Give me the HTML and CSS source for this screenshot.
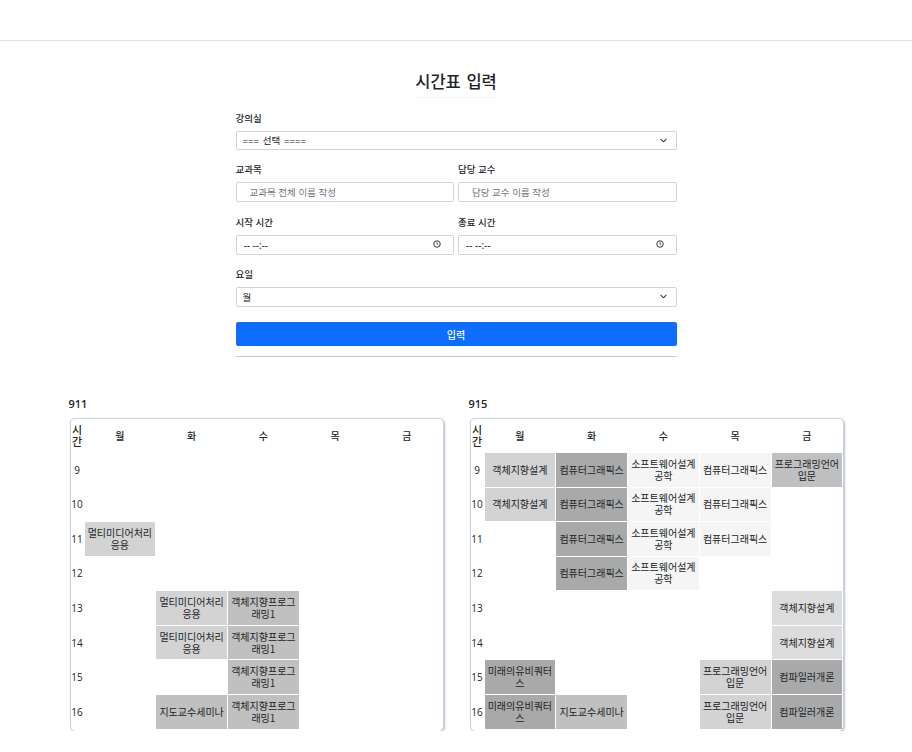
FILE: index.html
```html
<!DOCTYPE html>
<html lang="ko">
<head>
  <meta charset="UTF-8" />
  <meta name="viewport" content="width=device-width, initial-scale=1.0" />
  <title>시간표 입력</title>
  <link rel="stylesheet" href="styles.css">
</head>
<body>
  <header class="topbar"></header>

  <main>
    <div class="page-title">
      <h1>시간표 입력</h1>
    </div>

    <form class="entry-form">
      <div class="field">
        <label for="room">강의실</label>
        <div class="control">
          <select id="room" class="short">
            <option>=== 선택 ====</option>
            <option>911</option>
            <option>915</option>
          </select>
          <svg class="control-icon chevron" viewBox="0 0 16 16"><path d="M2 5l6 6 6-6" fill="none" stroke="#343a40" stroke-width="2.4" stroke-linecap="round" stroke-linejoin="round"/></svg>
        </div>
      </div>

      <div class="field-row wide">
        <div class="field">
          <label for="subject">교과목</label>
          <input type="text" id="subject" class="text-input" placeholder="교과목 전체 이름 작성">
        </div>
        <div class="field">
          <label for="professor">담당 교수</label>
          <input type="text" id="professor" class="text-input" placeholder="담당 교수 이름 작성">
        </div>
      </div>

      <div class="field-row">
        <div class="field">
          <label for="start">시작 시간</label>
          <div class="control">
            <input type="text" id="start" class="time-input" value="-- --:--">
            <svg class="control-icon clock" viewBox="0 0 16 16"><circle cx="8" cy="8" r="6.5" fill="none" stroke="#222" stroke-width="1.8"/><path d="M8 4v4.3l2.6 1.6" fill="none" stroke="#222" stroke-width="1.5"/></svg>
          </div>
        </div>
        <div class="field">
          <label for="end">종료 시간</label>
          <div class="control">
            <input type="text" id="end" class="time-input" value="-- --:--">
            <svg class="control-icon clock" viewBox="0 0 16 16"><circle cx="8" cy="8" r="6.5" fill="none" stroke="#222" stroke-width="1.8"/><path d="M8 4v4.3l2.6 1.6" fill="none" stroke="#222" stroke-width="1.5"/></svg>
          </div>
        </div>
      </div>

      <div class="field">
        <label for="day">요일</label>
        <div class="control">
          <select id="day">
            <option>월</option>
            <option>화</option>
            <option>수</option>
            <option>목</option>
            <option>금</option>
          </select>
          <svg class="control-icon chevron" viewBox="0 0 16 16"><path d="M2 5l6 6 6-6" fill="none" stroke="#343a40" stroke-width="2.4" stroke-linecap="round" stroke-linejoin="round"/></svg>
        </div>
      </div>

      <button type="button" class="submit">입력</button>
    </form>

    <hr class="divider">

    <div class="rooms">
      <section>
        <h2>911</h2>
        <div class="card">
          <div class="timetable">
            <div class="head time">시간</div><div class="head">월</div><div class="head">화</div><div class="head">수</div><div class="head">목</div><div class="head">금</div>
            <div class="time">9</div><div></div><div></div><div></div><div></div><div></div>
            <div class="time">10</div><div></div><div></div><div></div><div></div><div></div>
            <div class="time">11</div><div class="lightgray">멀티미디어처리응용</div><div></div><div></div><div></div><div></div>
            <div class="time">12</div><div></div><div></div><div></div><div></div><div></div>
            <div class="time">13</div><div></div><div class="lightgray">멀티미디어처리응용</div><div class="silver">객체지향프로그래밍1</div><div></div><div></div>
            <div class="time">14</div><div></div><div class="lightgray">멀티미디어처리응용</div><div class="silver">객체지향프로그래밍1</div><div></div><div></div>
            <div class="time">15</div><div></div><div></div><div class="silver">객체지향프로그래밍1</div><div></div><div></div>
            <div class="time">16</div><div></div><div class="silver">지도교수세미나</div><div class="silver">객체지향프로그래밍1</div><div></div><div></div>
          </div>
        </div>
      </section>

      <section>
        <h2>915</h2>
        <div class="card">
          <div class="timetable">
            <div class="head time">시간</div><div class="head">월</div><div class="head">화</div><div class="head">수</div><div class="head">목</div><div class="head">금</div>
            <div class="time">9</div><div class="lightgray">객체지향설계</div><div class="darkgray">컴퓨터그래픽스</div><div class="whitesmoke">소프트웨어설계공학</div><div class="whitesmoke">컴퓨터그래픽스</div><div class="silver">프로그래밍언어입문</div>
            <div class="time">10</div><div class="lightgray">객체지향설계</div><div class="darkgray">컴퓨터그래픽스</div><div class="whitesmoke">소프트웨어설계공학</div><div class="whitesmoke">컴퓨터그래픽스</div><div></div>
            <div class="time">11</div><div></div><div class="darkgray">컴퓨터그래픽스</div><div class="whitesmoke">소프트웨어설계공학</div><div class="whitesmoke">컴퓨터그래픽스</div><div></div>
            <div class="time">12</div><div></div><div class="darkgray">컴퓨터그래픽스</div><div class="whitesmoke">소프트웨어설계공학</div><div></div><div></div>
            <div class="time">13</div><div></div><div></div><div></div><div></div><div class="gainsboro">객체지향설계</div>
            <div class="time">14</div><div></div><div></div><div></div><div></div><div class="gainsboro">객체지향설계</div>
            <div class="time">15</div><div class="darkgray">미래의유비쿼터스</div><div></div><div></div><div class="lightgray">프로그래밍언어입문</div><div class="darkgray">컴파일러개론</div>
            <div class="time">16</div><div class="darkgray">미래의유비쿼터스</div><div class="silver">지도교수세미나</div><div></div><div class="lightgray">프로그래밍언어입문</div><div class="darkgray">컴파일러개론</div>
          </div>
        </div>
      </section>
    </div>
  </main>
</body>
</html>
```

FILE: styles.css
```css
* {
  box-sizing: border-box;
}
body {
  font-family: "Liberation Sans", "Noto Sans CJK KR", sans-serif;
  background-color: #fff;
  color: #212529;
  margin: 0;
}
.topbar {
  height: 41px;
  border-bottom: 1px solid #dee2e6;
}
.page-title {
  text-align: center;
  padding-top: 28px;
}
h1 {
  display: inline-block;
  margin: 0;
  font-size: 16.5px;
  font-weight: 500;
  font-family: "Noto Sans CJK KR", sans-serif;
  word-spacing: 1px;
  line-height: 25px;
  padding-bottom: 3px;
  border-bottom: 1px solid #f3f3f3;
}
.entry-form {
  width: 441px;
  margin: 14px auto 0;
  display: flex;
  flex-direction: column;
}
.field {
  flex: 1;
  display: flex;
  flex-direction: column;
  margin-bottom: 13px;
}
.field-row {
  display: flex;
  gap: 4px;
}
.field-row.wide .field {
  margin-bottom: 14px;
}
label {
  font-size: 9.5px;
  font-weight: 500;
  line-height: 13px;
  margin-bottom: 6px;
}
.control {
  position: relative;
}
select,
input {
  display: block;
  width: 100%;
  height: 20px;
  margin: 0;
  font-family: "Liberation Sans", "Noto Sans CJK KR", sans-serif;
  font-size: 9.5px;
  color: #212529;
  background: #fff;
  border: 1px solid #ced4da;
  border-radius: 2px;
  outline: none;
  appearance: none;
}
select {
  padding: 0 6px;
  word-spacing: 1px;
}
select.short {
  height: 19px;
}
.text-input {
  padding: 0 13px;
}
.text-input::placeholder {
  color: #6c757d;
  opacity: 1;
}
.time-input {
  padding: 0 7px;
  font-family: "Open Sans", sans-serif;
  font-size: 10px;
  color: #111;
}
.control-icon {
  position: absolute;
  pointer-events: none;
}
.chevron {
  top: 6px;
  right: 10px;
  width: 7px;
  height: 7px;
}
.clock {
  top: 5px;
  right: 13px;
  width: 8px;
  height: 8px;
}
.submit {
  height: 24px;
  margin-top: 2px;
  padding: 0;
  font-family: "Noto Sans CJK KR", sans-serif;
  font-size: 10px;
  font-weight: 500;
  color: #fff;
  background-color: #0d6efd;
  border: none;
  border-radius: 2px;
  cursor: pointer;
}
.divider {
  width: 441px;
  margin: 10px auto 0;
  border: none;
  border-top: 1px solid #c8c8cc;
}
.rooms {
  width: 775px;
  margin: 40px auto 0;
  display: grid;
  grid-template-columns: 375px 375px;
  gap: 25px;
}
h2 {
  margin: 0 0 7px;
  font-family: "Open Sans", sans-serif;
  font-size: 11px;
  font-weight: 600;
  line-height: 14px;
}
.card {
  margin-left: 1px;
  height: 313px;
  background: #fff;
  border-top: 1px solid #d0d3d5;
  border-left: 1px solid #c7d0da;
  border-right: 1px solid #c7d0da;
  border-radius: 5px;
  box-shadow: 1px 1px 2px #b9c4cf;
  overflow: hidden;
}
.timetable {
  display: grid;
  grid-template-columns: 13px repeat(5, 70.75px);
  grid-template-rows: 33px repeat(8, 33.57px);
  gap: 1px;
  font-family: "Noto Sans CJK KR", sans-serif;
  font-size: 10px;
  line-height: 12px;
}
.timetable > div {
  display: flex;
  align-items: center;
  justify-content: center;
  text-align: center;
}
.head {
  font-weight: 500;
}
.time {
  font-family: "Open Sans", "Noto Sans CJK KR", sans-serif;
}
.head.time {
  font-size: 11px;
  line-height: 12px;
}
.lightgray {
  background-color: #d3d3d3;
}
.darkgray {
  background-color: #a9a9a9;
}
.silver {
  background-color: #c0c0c0;
}
.gainsboro {
  background-color: #dcdcdc;
}
.whitesmoke {
  background-color: #f5f5f5;
}
```
